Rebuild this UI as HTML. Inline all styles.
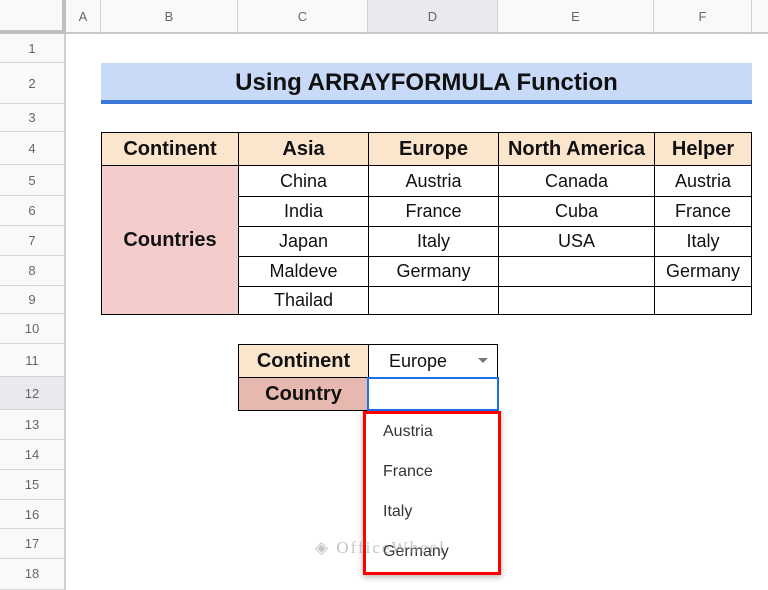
<!DOCTYPE html><html><head><style>
*{margin:0;padding:0;box-sizing:border-box}
body{width:768px;height:590px;overflow:hidden;background:#fff;font-family:"Liberation Sans",Arial,sans-serif;position:relative}
.a{position:absolute}
.ch{position:absolute;top:0;height:34px;background:#f8f9fa;border-right:1px solid #d4d4d4;border-bottom:2px solid #c8c8c8;color:#666;font-size:13px;text-align:center;line-height:34px}
.rh{position:absolute;left:0;width:66px;background:#f8f9fa;border-right:2px solid #d0d0d0;border-bottom:1px solid #d4d4d4;color:#666;font-size:13px;text-align:center}
.c{position:absolute;border:1px solid #000;text-align:center;font-size:18px;color:#111;display:flex;align-items:center;justify-content:center}
.h{background:#fce5cd;font-weight:bold;font-size:20px}
</style></head><body>
<div class="ch" style="left:0;width:66px;border-right:4px solid #c0c0c0;border-bottom:4px solid #c0c0c0"></div>
<div class="ch" style="left:66px;width:35px">A</div>
<div class="ch" style="left:101px;width:137px">B</div>
<div class="ch" style="left:238px;width:130px">C</div>
<div class="ch" style="left:368px;width:130px;background:#e8eaed">D</div>
<div class="ch" style="left:498px;width:156px">E</div>
<div class="ch" style="left:654px;width:98px">F</div>
<div class="ch" style="left:752px;width:20px"></div>
<div class="rh" style="top:34px;height:29px;line-height:29px">1</div>
<div class="rh" style="top:63px;height:41px;line-height:41px">2</div>
<div class="rh" style="top:104px;height:28px;line-height:28px">3</div>
<div class="rh" style="top:132px;height:33px;line-height:33px">4</div>
<div class="rh" style="top:165px;height:31px;line-height:31px">5</div>
<div class="rh" style="top:196px;height:30px;line-height:30px">6</div>
<div class="rh" style="top:226px;height:30px;line-height:30px">7</div>
<div class="rh" style="top:256px;height:30px;line-height:30px">8</div>
<div class="rh" style="top:286px;height:28px;line-height:28px">9</div>
<div class="rh" style="top:314px;height:30px;line-height:30px">10</div>
<div class="rh" style="top:344px;height:33px;line-height:33px">11</div>
<div class="rh" style="top:377px;height:33px;line-height:33px;background:#e8eaed">12</div>
<div class="rh" style="top:410px;height:30px;line-height:30px">13</div>
<div class="rh" style="top:440px;height:30px;line-height:30px">14</div>
<div class="rh" style="top:470px;height:30px;line-height:30px">15</div>
<div class="rh" style="top:500px;height:29px;line-height:29px">16</div>
<div class="rh" style="top:529px;height:30px;line-height:30px">17</div>
<div class="rh" style="top:559px;height:31px;line-height:30px">18</div>

<div class="a" style="left:101px;top:63px;width:651px;height:41px;background:#c9daf8;border-bottom:4px solid #3c78d8;text-align:center;font-weight:bold;font-size:24px;line-height:40px;color:#111">Using ARRAYFORMULA Function</div>

<div class="c h" style="left:101px;top:132px;width:138px;height:34px">Continent</div>
<div class="c h" style="left:238px;top:132px;width:131px;height:34px">Asia</div>
<div class="c h" style="left:368px;top:132px;width:131px;height:34px">Europe</div>
<div class="c h" style="left:498px;top:132px;width:157px;height:34px">North America</div>
<div class="c h" style="left:654px;top:132px;width:98px;height:34px">Helper</div>
<div class="c" style="left:101px;top:165px;width:138px;height:150px;background:#f4cccc;font-weight:bold;font-size:20px">Countries</div>

<div class="c" style="left:238px;top:165px;width:131px;height:32px">China</div>
<div class="c" style="left:368px;top:165px;width:131px;height:32px">Austria</div>
<div class="c" style="left:498px;top:165px;width:157px;height:32px">Canada</div>
<div class="c" style="left:654px;top:165px;width:98px;height:32px">Austria</div>
<div class="c" style="left:238px;top:196px;width:131px;height:31px">India</div>
<div class="c" style="left:368px;top:196px;width:131px;height:31px">France</div>
<div class="c" style="left:498px;top:196px;width:157px;height:31px">Cuba</div>
<div class="c" style="left:654px;top:196px;width:98px;height:31px">France</div>
<div class="c" style="left:238px;top:226px;width:131px;height:31px">Japan</div>
<div class="c" style="left:368px;top:226px;width:131px;height:31px">Italy</div>
<div class="c" style="left:498px;top:226px;width:157px;height:31px">USA</div>
<div class="c" style="left:654px;top:226px;width:98px;height:31px">Italy</div>
<div class="c" style="left:238px;top:256px;width:131px;height:31px">Maldeve</div>
<div class="c" style="left:368px;top:256px;width:131px;height:31px">Germany</div>
<div class="c" style="left:498px;top:256px;width:157px;height:31px"></div>
<div class="c" style="left:654px;top:256px;width:98px;height:31px">Germany</div>
<div class="c" style="left:238px;top:286px;width:131px;height:29px">Thailad</div>
<div class="c" style="left:368px;top:286px;width:131px;height:29px"></div>
<div class="c" style="left:498px;top:286px;width:157px;height:29px"></div>
<div class="c" style="left:654px;top:286px;width:98px;height:29px"></div>

<div class="c h" style="left:238px;top:344px;width:131px;height:34px">Continent</div>
<div class="c" style="left:368px;top:344px;width:130px;height:34px;justify-content:flex-start;padding-left:20px">Europe</div>
<div class="a" style="left:478px;top:358px;width:0;height:0;border-left:5px solid transparent;border-right:5px solid transparent;border-top:5px solid #777"></div>
<div class="c" style="left:238px;top:377px;width:131px;height:34px;background:#e6b8af;font-weight:bold;font-size:20px">Country</div>
<div class="a" style="left:367px;top:377px;width:132px;height:34px;border:2px solid #1a73e8;background:#fff"></div>

<div class="a" style="left:363px;top:411px;width:138px;height:164px;border:3px solid #f00;background:#fff;box-shadow:0 2px 6px rgba(0,0,0,.3);font-size:16px;color:#333">
<div class="a" style="left:17px;top:9px">Austria</div>
<div class="a" style="left:17px;top:49px">France</div>
<div class="a" style="left:17px;top:89px">Italy</div>
<div class="a" style="left:17px;top:129px">Germany</div>
</div>
<div class="a" style="left:315px;top:538px;font-size:17px;color:rgba(150,150,150,.55);font-family:'Liberation Serif',serif;letter-spacing:2px">◈ OfficeWheel</div>
</body></html>
